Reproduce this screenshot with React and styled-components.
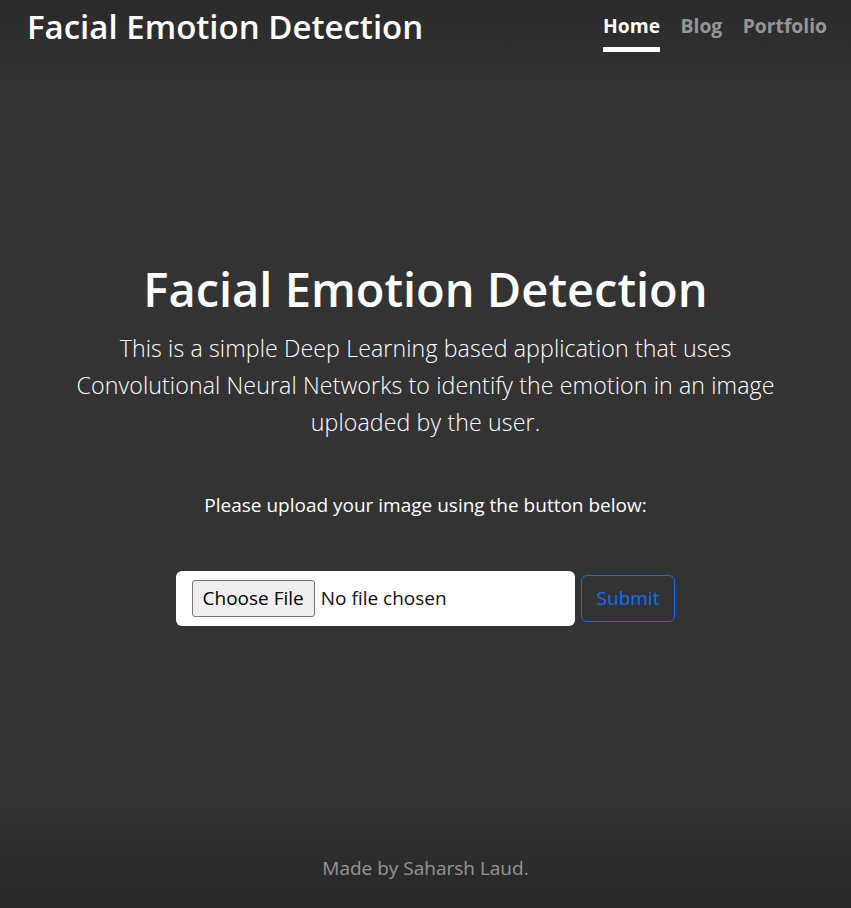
import { useState } from 'react';
import styled, { createGlobalStyle } from 'styled-components';

const GlobalStyle = createGlobalStyle`
  html, body, #root {
    height: 100%;
  }

  body {
    margin: 0;
    font-family: "Open Sans", "Noto Sans", sans-serif;
    color: #fff;
    background: #333;
  }

  * {
    box-sizing: border-box;
  }
`;

const Page = styled.div`
  display: flex;
  flex-direction: column;
  min-height: 100vh;
  text-align: center;
  background: linear-gradient(
    to bottom,
    #2a2a2a 0,
    #333 90px,
    #333 calc(100% - 110px),
    #272727 100%
  );
`;

const Header = styled.header`
  display: flex;
  justify-content: space-between;
  align-items: flex-start;
  padding: 7px 24px 0 27px;
`;

const Brand = styled.h3`
  margin: 0;
  font-size: 33px;
  font-weight: 600;
  line-height: 40px;
`;

const Nav = styled.nav`
  display: flex;
  gap: 20.5px;
`;

const NavLink = styled.a`
  padding: 5px 0 7px;
  font-size: 19.3px;
  font-weight: 700;
  line-height: 28px;
  text-decoration: none;
  cursor: pointer;
  color: ${({ $active }) => ($active ? '#fff' : 'rgba(255, 255, 255, 0.5)')};
  border-bottom: 5px solid ${({ $active }) => ($active ? '#fff' : 'transparent')};

  &:hover {
    color: rgba(255, 255, 255, 0.75);
  }
`;

const Main = styled.main`
  flex: 1;
  display: flex;
  flex-direction: column;
  justify-content: center;
  align-items: center;
  padding: 0 16px 19px;
`;

const Title = styled.h1`
  margin: 0 0 13px;
  font-size: 47px;
  font-weight: 600;
  line-height: 56px;
`;

const Lead = styled.p`
  max-width: 740px;
  margin: 0;
  font-size: 23.2px;
  font-weight: 300;
  line-height: 37px;
  letter-spacing: 0.1px;
`;

const Prompt = styled.h5`
  margin: 50px 0 0;
  font-size: 19px;
  font-weight: 500;
  line-height: 28.5px;
`;

const UploadForm = styled.form`
  display: flex;
  align-items: center;
  gap: 6px;
  margin-top: 51px;
`;

const FileField = styled.label`
  display: flex;
  align-items: center;
  gap: 6px;
  width: 399px;
  padding: 9px 16px;
  background: #fff;
  border-radius: 6px;
  cursor: pointer;

  input {
    display: none;
  }
`;

const ChooseButton = styled.span`
  display: inline-flex;
  align-items: center;
  height: 37px;
  padding: 0 10px;
  font-size: 19px;
  color: #000;
  background: #efefef;
  border: 1px solid #767676;
  border-radius: 3px;
`;

const FileName = styled.span`
  font-size: 19px;
  color: #111;
  white-space: nowrap;
  overflow: hidden;
  text-overflow: ellipsis;
`;

const SubmitButton = styled.button`
  padding: 8px 15px;
  font-family: inherit;
  font-size: 19px;
  line-height: 29px;
  color: #0d6efd;
  background: transparent;
  border: 1px solid #0d6efd;
  border-radius: 6px;
  cursor: pointer;

  &:hover {
    color: #fff;
    background: #0d6efd;
  }
`;

const Footer = styled.footer`
  padding: 0 16px 26px;
  font-size: 19px;
  line-height: 28.5px;
  color: rgba(255, 255, 255, 0.5);
`;

const links = ['Home', 'Blog', 'Portfolio'];

function App() {
  const [file, setFile] = useState(null);

  return (
    <Page>
      <GlobalStyle />
      <Header>
        <Brand>Facial Emotion Detection</Brand>
        <Nav>
          {links.map((link) => (
            <NavLink key={link} $active={link === 'Home'}>
              {link}
            </NavLink>
          ))}
        </Nav>
      </Header>
      <Main>
        <Title>Facial Emotion Detection</Title>
        <Lead>
          This is a simple Deep Learning based application that uses
          Convolutional Neural Networks to identify the emotion in an image
          uploaded by the user.
        </Lead>
        <Prompt>Please upload your image using the button below:</Prompt>
        <UploadForm onSubmit={(e) => e.preventDefault()}>
          <FileField>
            <input
              type="file"
              accept="image/*"
              onChange={(e) => setFile(e.target.files[0] || null)}
            />
            <ChooseButton>Choose File</ChooseButton>
            <FileName>{file ? file.name : 'No file chosen'}</FileName>
          </FileField>
          <SubmitButton type="submit">Submit</SubmitButton>
        </UploadForm>
      </Main>
      <Footer>Made by Saharsh Laud.</Footer>
    </Page>
  );
}

export default App;
